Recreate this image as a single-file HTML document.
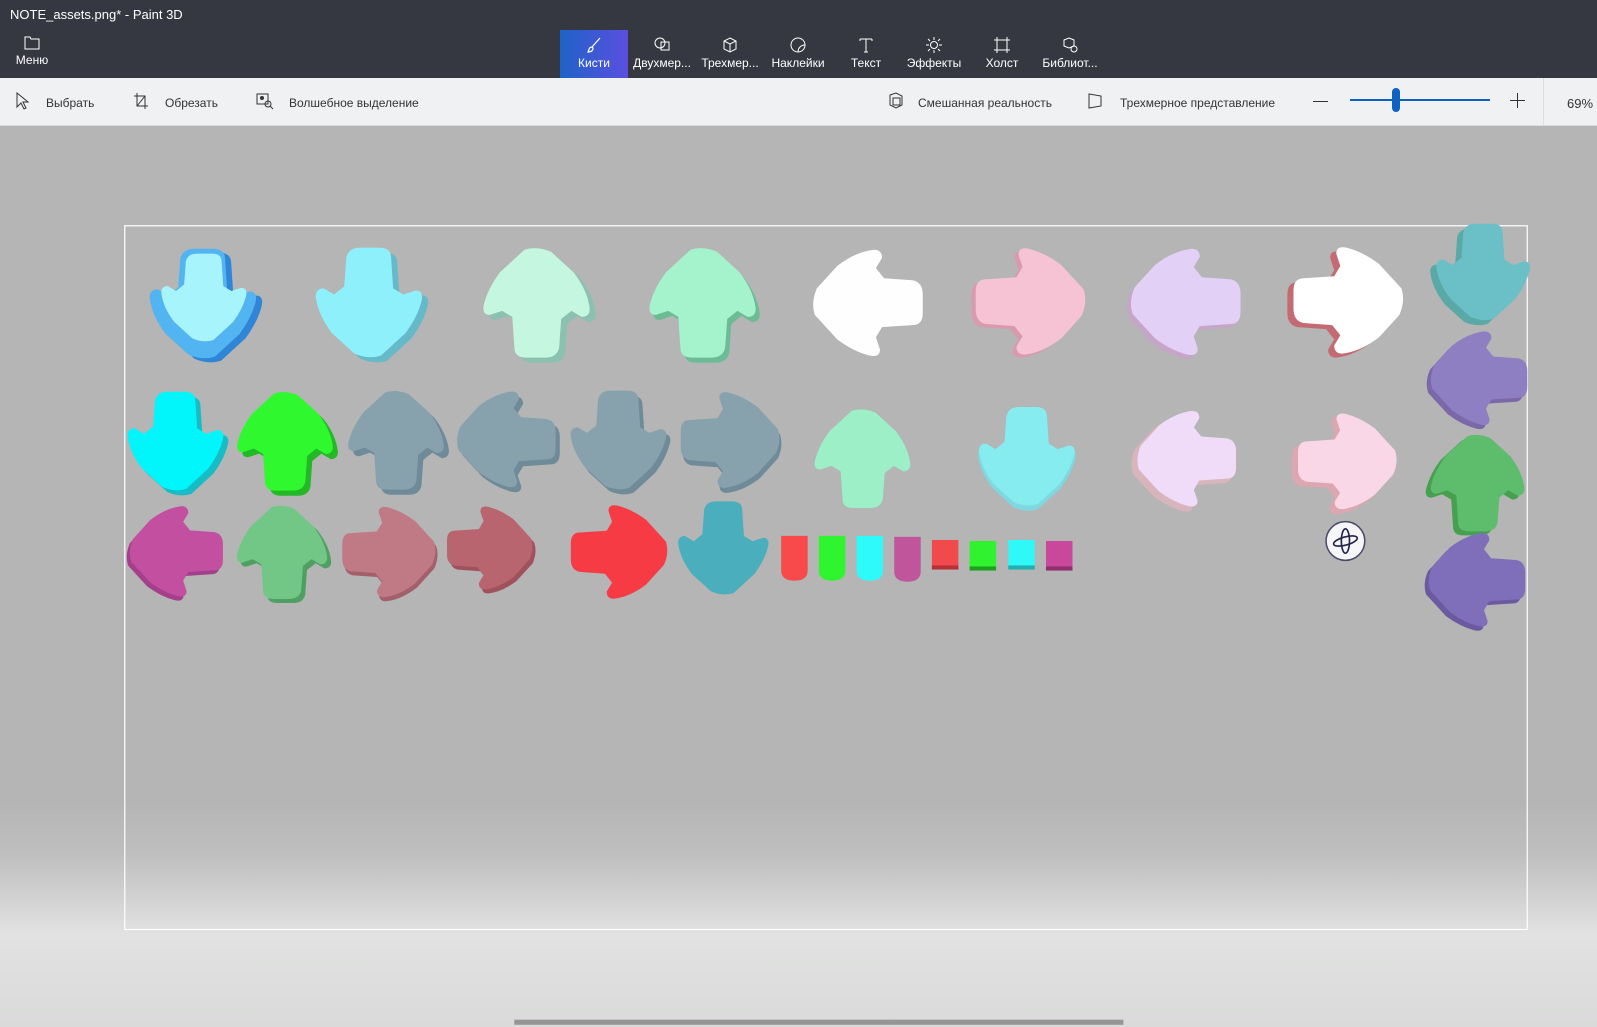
<!DOCTYPE html>
<html><head><meta charset="utf-8">
<style>
*{margin:0;padding:0;box-sizing:border-box}
body{width:1597px;height:1027px;overflow:hidden;font-family:"Liberation Sans",sans-serif;position:relative;background:linear-gradient(#b4b5b4 0,#b4b5b4 78%,#bdbebd 83%,#e1e2e1 91%,#d9dad9 100%)}
.title{position:absolute;left:0;top:0;width:1597px;height:78px;background:#353841;color:#fff}
.title .t{position:absolute;left:10px;top:7px;font-size:13px}
.menu{position:absolute;left:15px;top:36px;width:34px;text-align:center;font-size:12px;color:#fff}
.tab{position:absolute;top:30px;height:48px;width:68px;text-align:center;font-size:12px;color:#fff}
.tab svg{display:block;margin:6px auto 2px}
.tab.act{background:linear-gradient(90deg,#1f63c7,#5a4fe0)}
.bar{position:absolute;left:0;top:78px;width:1597px;height:48px;background:#f0f1f3;color:#333;font-size:12px;border-bottom:1px solid #ddd}
.bar span{position:absolute;top:18px}
.bar svg{position:absolute;top:14px}
</style></head><body>
<div class="title">
<div class="t">NOTE_assets.png* - Paint 3D</div>
<div class="menu"><svg width="16" height="14" viewBox="0 0 16 14" style="display:block;margin:0 auto 3px"><path d="M1 1h5l1 2h8v10H1z" fill="none" stroke="#fff" stroke-width="1"/></svg>Меню</div>
<div class="tab act" style="left:560px"><svg width="18" height="18" viewBox="0 0 18 18"><path d="M15 2L7 11M7 11c-3 0-3 3-4 5 3 0 5-1 5-4z" fill="none" stroke="#fff" stroke-width="1.2"/></svg>Кисти</div>
<div class="tab" style="left:628px"><svg width="18" height="18" viewBox="0 0 18 18"><circle cx="7" cy="7" r="5" fill="none" stroke="#fff"/><rect x="8" y="6" width="8" height="8" fill="none" stroke="#fff"/></svg>Двухмер...</div>
<div class="tab" style="left:696px"><svg width="18" height="18" viewBox="0 0 18 18"><path d="M9 2l6 3v8l-6 3-6-3V5zM3 5l6 3 6-3M9 8v8" fill="none" stroke="#fff"/></svg>Трехмер...</div>
<div class="tab" style="left:764px"><svg width="18" height="18" viewBox="0 0 18 18"><circle cx="9" cy="9" r="7" fill="none" stroke="#fff"/><path d="M9 16c0-4 3-7 7-7" fill="none" stroke="#fff"/></svg>Наклейки</div>
<div class="tab" style="left:832px"><svg width="18" height="18" viewBox="0 0 18 18"><path d="M3 3h12M9 3v13M3 3v2M15 3v2M7 16h4" fill="none" stroke="#fff"/></svg>Текст</div>
<div class="tab" style="left:900px"><svg width="18" height="18" viewBox="0 0 18 18"><circle cx="9" cy="9" r="3.5" fill="none" stroke="#fff"/><path d="M9 1v3M9 14v3M1 9h3M14 9h3M3 3l2 2M13 13l2 2M3 15l2-2M13 5l2-2" stroke="#fff"/></svg>Эффекты</div>
<div class="tab" style="left:968px"><svg width="18" height="18" viewBox="0 0 18 18"><rect x="4" y="4" width="10" height="10" fill="none" stroke="#fff"/><path d="M4 1v3M14 1v3M4 14v3M14 14v3M1 4h3M1 14h3M14 4h3M14 14h3" stroke="#fff"/></svg>Холст</div>
<div class="tab" style="left:1036px"><svg width="18" height="18" viewBox="0 0 18 18"><path d="M8 2l5 2v6l-5 2-5-2V4z" fill="none" stroke="#fff"/><circle cx="13" cy="13" r="3" fill="none" stroke="#fff"/></svg>Библиот...</div>
</div>
<div class="bar">
<svg style="left:15px" width="14" height="18" viewBox="0 0 14 18"><path d="M2 1v14l4-4 3 6 2-1-3-6h5z" fill="none" stroke="#333"/></svg><span style="left:46px">Выбрать</span>
<svg style="left:133px" width="16" height="18" viewBox="0 0 16 18"><path d="M4 1v13h11M1 4h11v13M12 4L4 14" fill="none" stroke="#333"/></svg><span style="left:165px">Обрезать</span>
<svg style="left:256px" width="18" height="18" viewBox="0 0 18 18"><rect x="1" y="2" width="11" height="10" fill="none" stroke="#333"/><circle cx="6" cy="6" r="2" fill="#333"/><circle cx="12" cy="12" r="3" fill="none" stroke="#333"/><path d="M14 14l3 3" stroke="#333"/></svg><span style="left:289px">Волшебное выделение</span>
<svg style="left:888px" width="16" height="18" viewBox="0 0 16 18"><path d="M2 3l6-2 6 3v9l-6 3-6-3z M5 6h7v7H5z" fill="none" stroke="#333"/></svg><span style="left:918px">Смешанная реальность</span>
<svg style="left:1088px" width="16" height="18" viewBox="0 0 16 18"><path d="M1 2l12 2v10L1 16z" fill="none" stroke="#333"/></svg><span style="left:1120px">Трехмерное представление</span>
<div style="position:absolute;left:1313px;top:23px;width:15px;height:1px;background:#333"></div>
<div style="position:absolute;left:1350px;top:21px;width:140px;height:2px;background:#0e63c1"></div>
<div style="position:absolute;left:1392px;top:10px;width:8px;height:24px;border-radius:4px;background:#0e63c1"></div>
<div style="position:absolute;left:1510px;top:22px;width:15px;height:1px;background:#333"></div>
<div style="position:absolute;left:1517px;top:15px;width:1px;height:15px;background:#333"></div>
<div style="position:absolute;left:1543px;top:0;width:1px;height:48px;background:#ddd"></div>
<span style="left:1567px;font-size:13px">69%</span>
</div>
<svg style="position:absolute;left:0;top:0" width="1597" height="1027" viewBox="0 0 1568 1008">
<defs><path id="a" d="M-12,-52 Q0,-56 14,-50 L36,-30 Q50,-12 52,6 Q52,14 44,14 L34,8 L24,16 L22,44 Q20,54 8,54 L-10,54 Q-22,54 -22,44 L-24,14 L-34,8 L-46,12 Q-54,12 -52,2 Q-48,-14 -36,-30 Z"/></defs>
<rect x="122.5" y="221.5" width="1377" height="691" fill="none" stroke="#fff" stroke-width="1.2"/>
<g>
<use href="#a" transform="translate(205,302) rotate(180)" fill="#2f86d6"/>
<use href="#a" transform="translate(199,298) rotate(180)" fill="#52b4f0"/>
<use href="#a" transform="translate(200,292) rotate(180) scale(0.8)" fill="#a8f4fc"/>
<use href="#a" transform="translate(368,302) rotate(180)" fill="#66b9c8"/>
<use href="#a" transform="translate(362,297) rotate(180)" fill="#8ef0fb"/>
<use href="#a" transform="translate(533,302)" fill="#8cc0b0"/>
<use href="#a" transform="translate(527,297)" fill="#c4f6e0"/>
<use href="#a" transform="translate(694,302)" fill="#6dbb95"/>
<use href="#a" transform="translate(690,297)" fill="#a4f3cd"/>
<use href="#a" transform="translate(852,297) rotate(-90)" fill="#fefefe"/>
<use href="#a" transform="translate(1008,299) rotate(90)" fill="#d99aae"/>
<use href="#a" transform="translate(1012,296) rotate(90)" fill="#f5c3d3"/>
<use href="#a" transform="translate(1160,300) rotate(-90)" fill="#c5a6c6"/>
<use href="#a" transform="translate(1164,296) rotate(-90)" fill="#e3d0f6"/>
<use href="#a" transform="translate(1318,299) rotate(90)" fill="#c46a72"/>
<use href="#a" transform="translate(1324,295) rotate(90)" fill="#fff"/>
<use href="#a" transform="translate(1450,272) rotate(180) scale(0.88)" fill="#5aa9a6"/>
<use href="#a" transform="translate(1456,267) rotate(180) scale(0.88)" fill="#6bbfc6"/>
<use href="#a" transform="translate(1448,375) rotate(-90) scale(0.88)" fill="#7a68a8"/>
<use href="#a" transform="translate(1452,371) rotate(-90) scale(0.88)" fill="#8e7fc3"/>
<use href="#a" transform="translate(1446,478) scale(0.88)" fill="#46a050"/>
<use href="#a" transform="translate(1451,474) scale(0.88)" fill="#5dbd6d"/>
<use href="#a" transform="translate(1446,573) rotate(-90) scale(0.88)" fill="#6b5aa0"/>
<use href="#a" transform="translate(1450,569) rotate(-90) scale(0.88)" fill="#7f6fba"/>
<use href="#a" transform="translate(177,438) rotate(180) scale(0.9)" fill="#17bcc4"/>
<use href="#a" transform="translate(172,433) rotate(180) scale(0.9)" fill="#00f6fb"/>
<use href="#a" transform="translate(285,438) scale(0.9)" fill="#22b826"/>
<use href="#a" transform="translate(280,433) scale(0.9)" fill="#2ff82f"/>
<use href="#a" transform="translate(394,437) scale(0.9)" fill="#6f8a98"/>
<use href="#a" transform="translate(389,432) scale(0.9)" fill="#87a2ad"/>
<use href="#a" transform="translate(501,436) rotate(-90) scale(0.9)" fill="#6f8a98"/>
<use href="#a" transform="translate(497,431) rotate(-90) scale(0.9)" fill="#87a2ad"/>
<use href="#a" transform="translate(611,437) rotate(180) scale(0.9)" fill="#6f8a98"/>
<use href="#a" transform="translate(607,432) rotate(180) scale(0.9)" fill="#87a2ad"/>
<use href="#a" transform="translate(719,437) rotate(90) scale(0.9)" fill="#6f8a98"/>
<use href="#a" transform="translate(717,432) rotate(90) scale(0.9)" fill="#87a2ad"/>
<use href="#a" transform="translate(847,450) scale(0.9)" fill="#9cefc6"/>
<use href="#a" transform="translate(1008,452) rotate(180) scale(0.92)" fill="#7fd8e0"/>
<use href="#a" transform="translate(1008,448) rotate(180) scale(0.9)" fill="#86ecf0"/>
<use href="#a" transform="translate(1160,454) rotate(-90) scale(0.92)" fill="#d8b4bc"/>
<use href="#a" transform="translate(1165,450) rotate(-90) scale(0.9)" fill="#f0dcf9"/>
<use href="#a" transform="translate(1318,457) rotate(90) scale(0.92)" fill="#dba7b0"/>
<use href="#a" transform="translate(1323,453) rotate(90) scale(0.9)" fill="#fad7e7"/>
<use href="#a" transform="translate(170,545) rotate(-90) scale(0.85)" fill="#a43f8c"/>
<use href="#a" transform="translate(173,541) rotate(-90) scale(0.85)" fill="#c34fa0"/>
<use href="#a" transform="translate(281,546) scale(0.85)" fill="#4f9f63"/>
<use href="#a" transform="translate(277,542) scale(0.85)" fill="#72c686"/>
<use href="#a" transform="translate(384,546) rotate(90) scale(0.85)" fill="#a3606b"/>
<use href="#a" transform="translate(382,542) rotate(90) scale(0.85)" fill="#c07a85"/>
<use href="#a" transform="translate(484,542) rotate(90) scale(0.78)" fill="#a0525c"/>
<use href="#a" transform="translate(481,538) rotate(90) scale(0.78)" fill="#b96570"/>
<use href="#a" transform="translate(608,542) rotate(90) scale(0.88)" fill="#f73b45"/>
<use href="#a" transform="translate(710,538) rotate(180) scale(0.85)" fill="#4aaebc"/>
</g>
<path d="M767,526h26v34q0,10-13,10q-13,0-13-10z" fill="#f84a4a"/>
<path d="M804,526h26v34q0,10-13,10q-13,0-13-10z" fill="#2ff52f"/>
<path d="M841,526h26v34q0,10-13,10q-13,0-13-10z" fill="#2ffafa"/>
<path d="M878,527h26v34q0,10-13,10q-13,0-13-10z" fill="#c0559c"/>
<rect x="915" y="530" width="26" height="29" fill="#f14a4c"/><rect x="915" y="555" width="26" height="4" fill="#b83035"/>
<rect x="952" y="531" width="26" height="29" fill="#30f22f"/><rect x="952" y="556" width="26" height="4" fill="#20a020"/>
<rect x="990" y="530" width="26" height="29" fill="#2ff8f8"/><rect x="990" y="555" width="26" height="4" fill="#20b0b0"/>
<rect x="1027" y="531" width="26" height="29" fill="#c9489c"/><rect x="1027" y="556" width="26" height="4" fill="#90306f"/>
<circle cx="1321" cy="531" r="19" fill="#f6f6f8" stroke="#4a4a6a" stroke-width="1.5"/>
<ellipse cx="1321" cy="531" rx="4" ry="12" fill="none" stroke="#22224a" stroke-width="1.6"/>
<ellipse cx="1321" cy="531" rx="12" ry="4" fill="none" stroke="#22224a" stroke-width="1.6" transform="rotate(-15 1321 531)"/>
<rect x="505" y="1001" width="598" height="5" fill="#959595"/>
</svg>
</body></html>
